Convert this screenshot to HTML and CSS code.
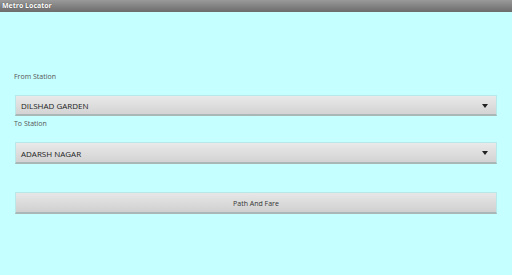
FILE: index.html
```html
<!DOCTYPE html>
<html>
<head>
<meta charset="utf-8">
<link rel="stylesheet" href="styles.css">
</head>
<body>
<div class="titlebar">Metro Locator</div>
<main class="content">
  <div class="label label-from">From Station</div>
  <div class="spinner spinner-from">
    <span>DILSHAD GARDEN</span>
    <svg class="arrow" width="6" height="4" viewBox="0 0 6 4"><path d="M0 0H6L3 4Z" fill="#222"/></svg>
  </div>
  <div class="label label-to">To Station</div>
  <div class="spinner spinner-to">
    <span>ADARSH NAGAR</span>
    <svg class="arrow" width="6" height="4" viewBox="0 0 6 4"><path d="M0 0H6L3 4Z" fill="#222"/></svg>
  </div>
  <div class="button">Path And Fare</div>
</main>
</body>
</html>
```
FILE: styles.css
```css
html, body {
  margin: 0;
  padding: 0;
}
body {
  width: 512px;
  height: 275px;
  background: #c6ffff;
  font-family: "Open Sans", "DejaVu Sans", sans-serif;
  overflow: hidden;
}
.titlebar {
  height: 12px;
  line-height: 11px;
  padding-left: 2px;
  background: linear-gradient(#9a9a9a, #6c6c6c);
  color: #fff;
  font-size: 7px;
  font-weight: bold;
  text-shadow: 0 0 1px #333;
}
.content {
  padding: 0 15px;
}
.label {
  font-size: 7px;
  line-height: 9px;
  color: #555;
  margin-left: -1px;
}
.label-from {
  margin-top: 60px;
}
.label-to {
  margin-top: 3px;
}
.spinner {
  display: flex;
  align-items: center;
  justify-content: space-between;
  box-sizing: border-box;
  height: 21px;
  margin-top: 14px;
  padding: 1px 8px 0 5px;
  background: linear-gradient(#e9e9e9, #d3d3d3);
  border: 1px solid #b8e8e8;
  border-bottom: 2px solid #a9b7b7;
  font-size: 8px;
  color: #222;
}
.spinner-to {
  height: 22px;
}
.arrow {
  display: block;
}
.button {
  box-sizing: border-box;
  height: 22px;
  margin-top: 28px;
  padding-top: 2px;
  display: flex;
  align-items: center;
  justify-content: center;
  background: linear-gradient(#e7e7e7, #d0d0d0);
  border: 1px solid #b8e8e8;
  border-bottom: 2px solid #a9b7b7;
  font-size: 7px;
  color: #333;
}
```
